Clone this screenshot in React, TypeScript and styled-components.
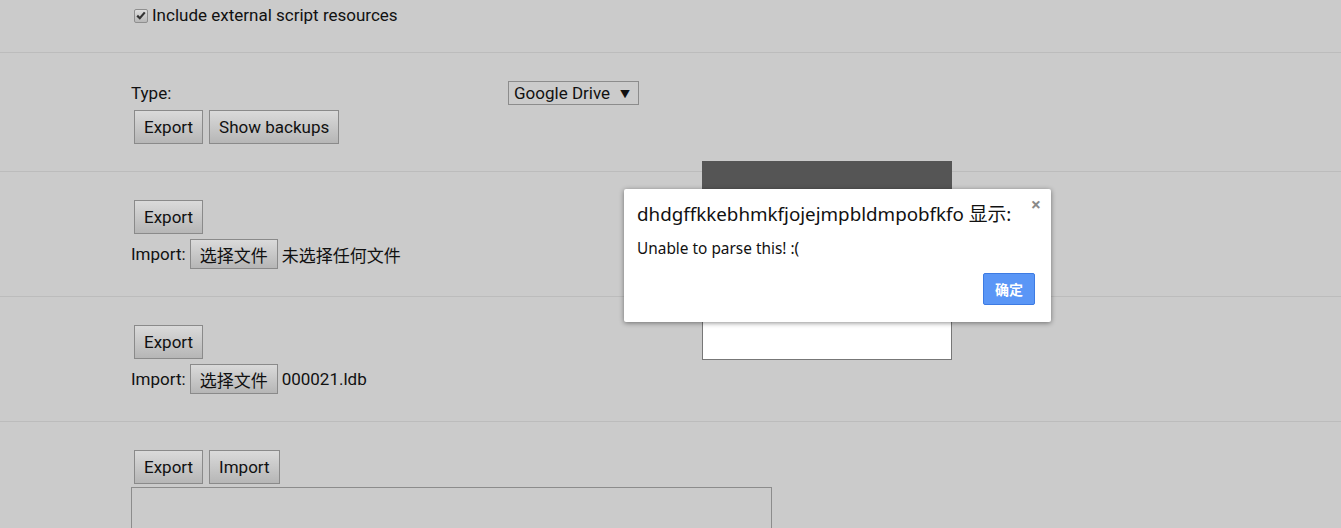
import React from "react";
import styled, { createGlobalStyle } from "styled-components";

const GlobalStyle = createGlobalStyle`
  html, body {
    margin: 0;
    padding: 0;
    background: #cbcbcb;
    overflow: hidden;
  }
  body {
    font-family: Roboto, "Noto Sans CJK SC", sans-serif;
    font-size: 17px;
    color: #111;
  }
`;

const Page = styled.div`
  position: relative;
  width: 1341px;
  height: 528px;
  overflow: hidden;
`;

const Section = styled.section<{ $top?: number }>`
  padding: ${(p) => p.$top ?? 28}px 0 27px 131px;
  border-bottom: 1px solid #bcbcbc;
  display: flex;
  flex-direction: column;
  gap: 5px;
`;

const CheckRow = styled.label`
  display: flex;
  align-items: center;
  height: 19px;
  line-height: 19px;
`;

const Check = styled.span`
  width: 14px;
  height: 14px;
  margin: 0 4px 0 3px;
  border: 1px solid #8f8f8f;
  border-radius: 2px;
  background: linear-gradient(#dedede, #b8b8b8);
  box-sizing: border-box;
  display: flex;
  align-items: center;
  justify-content: center;
`;

const TypeRow = styled.div`
  display: flex;
  align-items: center;
  height: 24px;
`;

const TypeLabel = styled.span`
  width: 377px;
`;

const Select = styled.div`
  width: 131px;
  height: 24px;
  box-sizing: border-box;
  border: 1px solid #8c8c8c;
  display: flex;
  align-items: center;
  justify-content: space-between;
  padding: 0 8px 0 5px;
`;

const Arrow = styled.span`
  font-size: 10px;
`;

const Buttons = styled.div`
  display: flex;
  gap: 6px;
  padding-left: 3px;
`;

const Button = styled.button<{ $h?: number }>`
  height: ${(p) => p.$h ?? 34}px;
  padding: 0 9px;
  font-family: Roboto, "Noto Sans CJK SC", sans-serif;
  font-size: 17px;
  color: #111;
  border: 1px solid #8a8a8a;
  border-radius: 0;
  background: linear-gradient(#dadada, #b6b6b6);
`;

const ImportRow = styled.div`
  display: flex;
  align-items: center;
  height: 30px;
  gap: 4px;
`;

const FileButton = styled(Button)`
  width: 88px;
  padding: 0;
  font-family: "Noto Sans CJK SC", sans-serif;
`;

const FileName = styled.span<{ $cjk?: boolean }>`
  font-family: ${(p) => (p.$cjk ? '"Noto Sans CJK SC", sans-serif' : "Roboto, sans-serif")};
`;

const TextArea = styled.div`
  width: 641px;
  height: 80px;
  box-sizing: border-box;
  border: 1px solid #8c8c8c;
  margin-top: -2px;
`;

const Panel = styled.div`
  position: absolute;
  left: 702px;
  top: 161px;
  width: 250px;
  height: 199px;
  box-sizing: border-box;
  background: #fff;
  border: 1px solid #777;
  border-top: none;
`;

const PanelHead = styled.div`
  height: 44px;
  margin: 0 -1px;
  background: #555;
`;

const Dialog = styled.div`
  position: absolute;
  left: 624px;
  top: 189px;
  width: 427px;
  height: 133px;
  box-sizing: border-box;
  background: #fff;
  border-radius: 2px;
  box-shadow: 0 1px 5px rgba(0, 0, 0, 0.45);
  padding: 13px 15px 0 13px;
  font-family: "Noto Sans", "Noto Sans CJK SC", sans-serif;
  display: flex;
  flex-direction: column;
`;

const Close = styled.span`
  position: absolute;
  right: 10px;
  top: 3px;
  font-size: 18px;
  font-weight: bold;
  color: #8a8a8a;
`;

const Title = styled.div`
  font-size: 18.8px;
  line-height: 24px;
  color: #111;
`;

const Message = styled.div`
  margin-top: 12px;
  font-size: 15.4px;
  line-height: 22px;
  color: #111;
`;

const Footer = styled.div`
  display: flex;
  justify-content: flex-end;
  margin-top: 13px;
  padding-right: 1px;
`;

const OkButton = styled.button`
  width: 52px;
  height: 32px;
  border: 1px solid #3d7be3;
  border-radius: 2px;
  background: #5a96f6;
  color: #fff;
  font-weight: bold;
  font-size: 14px;
  font-family: "Noto Sans CJK SC", sans-serif;
`;

export default function App() {
  return (
    <>
      <GlobalStyle />
      <Page>
        <Section $top={6}>
          <CheckRow>
            <Check>
              <svg width="10" height="9" viewBox="0 0 10 9">
                <path d="M1.2 4.6 L3.8 7.2 L8.8 1.4" fill="none" stroke="#333" strokeWidth="2.2" />
              </svg>
            </Check>
            Include external script resources
          </CheckRow>
        </Section>
        <Section>
          <TypeRow>
            <TypeLabel>Type:</TypeLabel>
            <Select>
              Google Drive <Arrow>▼</Arrow>
            </Select>
          </TypeRow>
          <Buttons>
            <Button>Export</Button>
            <Button>Show backups</Button>
          </Buttons>
        </Section>
        <Section>
          <Buttons>
            <Button>Export</Button>
          </Buttons>
          <ImportRow>
            Import:
            <FileButton $h={30}>选择文件</FileButton>
            <FileName $cjk>未选择任何文件</FileName>
          </ImportRow>
        </Section>
        <Section>
          <Buttons>
            <Button>Export</Button>
          </Buttons>
          <ImportRow>
            Import:
            <FileButton $h={30}>选择文件</FileButton>
            <FileName>000021.ldb</FileName>
          </ImportRow>
        </Section>
        <Section>
          <Buttons>
            <Button>Export</Button>
            <Button>Import</Button>
          </Buttons>
          <TextArea />
        </Section>
        <Panel>
          <PanelHead />
        </Panel>
        <Dialog>
          <Close>×</Close>
          <Title>dhdgffkkebhmkfjojejmpbldmpobfkfo 显示:</Title>
          <Message>Unable to parse this! :(</Message>
          <Footer>
            <OkButton>确定</OkButton>
          </Footer>
        </Dialog>
      </Page>
    </>
  );
}
